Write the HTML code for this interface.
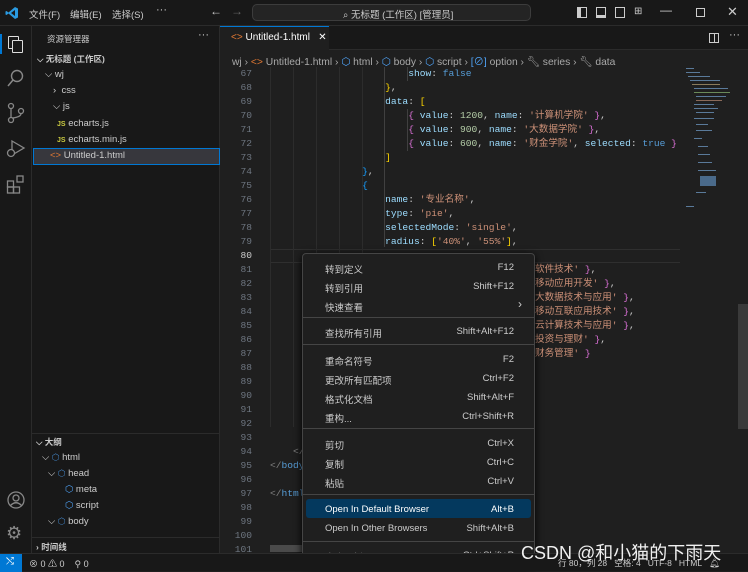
<!DOCTYPE html>
<html><head><meta charset="utf-8"><style>
*{margin:0;padding:0;box-sizing:border-box}
body{width:748px;height:571px;background:#1f1f1f;font-family:"Liberation Sans","Noto Sans CJK SC",sans-serif;color:#ccc;font-size:10px;position:relative;overflow:hidden}
.abs{position:absolute}
#title{left:0;top:0;width:748px;height:26px;background:#181818;border-bottom:1px solid #2b2b2b}
#act{left:0;top:26px;width:32px;height:527px;background:#181818;border-right:1px solid #2b2b2b}
#side{left:32px;top:26px;width:188px;height:527px;background:#181818;border-right:1px solid #2b2b2b}
.t{position:absolute;white-space:nowrap}
#tabs{left:220px;top:26px;width:528px;height:24px;background:#181818;border-bottom:1px solid #2b2b2b}
.code{font-family:"Liberation Mono","Noto Sans CJK SC",monospace;font-size:9.6px;position:absolute;white-space:pre;line-height:14px}
.ln{position:absolute;left:222px;width:30px;text-align:right;font-family:"Liberation Mono",monospace;font-size:9.6px;color:#6e7681}
.k{color:#9cdcfe}.s{color:#ce9178}.n{color:#b5cea8}.b{color:#569cd6}.y{color:#ffd700}.p{color:#da70d6}.bl{color:#179fff}.g{color:#808080}
#menu{left:302px;top:253px;width:233px;height:312px;background:#1f1f1f;border:1px solid #454545;border-radius:4px;box-shadow:0 2px 8px #000}
.mi{position:absolute;left:22px;font-size:9.5px;color:#ccc}
.mk{position:absolute;right:20px;font-size:9.5px;color:#ccc}
.sep{position:absolute;left:0;right:0;height:1px;background:#454545}
#status{left:0;top:553px;width:748px;height:18px;background:#181818;border-top:1px solid #2b2b2b}
</style></head><body>
<div id="title" class="abs">
 <svg class="abs" style="left:5px;top:6px" width="14" height="14" viewBox="0 0 14 14"><path d="M10 1 L13 2.5 V11.5 L10 13 L3.5 7.5 L1.5 9 L0.5 8.5 V5.5 L1.5 5 L3.5 6.5Z M10 4 L6 7 L10 10Z" fill="#2a9ae0" fill-rule="evenodd"/></svg>
 <div class="t" style="left:29px;top:7px;font-size:9.5px">文件(F)</div>
 <div class="t" style="left:70px;top:7px;font-size:9.5px">编辑(E)</div>
 <div class="t" style="left:112px;top:7px;font-size:9.5px">选择(S)</div>
 <div class="t" style="left:156px;top:4px;font-size:11px">···</div>
 <div class="t" style="left:210px;top:4px;font-size:12px;color:#ccc">←</div>
 <div class="t" style="left:231px;top:4px;font-size:12px;color:#666">→</div>
 <div class="abs" style="left:252px;top:4px;width:279px;height:17px;border:1px solid #3c3c3c;border-radius:5px;background:#242424"></div>
 <div class="t" style="left:343px;top:7px;font-size:9.5px">⌕ 无标题 (工作区) [管理员]</div>
 <div class="abs" style="left:577px;top:7px;width:10px;height:11px;border:1px solid #ccc;border-left:4px solid #ccc"></div>
 <div class="abs" style="left:596px;top:7px;width:10px;height:11px;border:1px solid #ccc;border-bottom:3px solid #ccc"></div>
 <div class="abs" style="left:615px;top:7px;width:10px;height:11px;border:1px solid #ccc"></div>
 <div class="t" style="left:634px;top:6px;font-size:10px">⊞</div>
 <div class="t" style="left:660px;top:3px;font-size:12px">—</div>
 <div class="abs" style="left:696px;top:8px;width:9px;height:9px;border:1px solid #ccc"></div>
 <div class="t" style="left:727px;top:4px;font-size:13px">✕</div>
</div>
<div id="act" class="abs">
 <div class="abs" style="left:0;top:8px;width:2px;height:20px;background:#0078d4"></div>
 <div class="abs" style="left:8px;top:10px;width:11px;height:13px;border:1.5px solid #ddd;border-radius:1px"></div>
 <div class="abs" style="left:12px;top:14px;width:11px;height:13px;border:1.5px solid #ddd;background:#181818;border-radius:1px"></div>
 <svg class="abs" style="left:6px;top:42px" width="20" height="20"><circle cx="11" cy="8" r="5.5" stroke="#888" stroke-width="1.4" fill="none"/><path d="M7 12 L2 18" stroke="#888" stroke-width="1.5"/></svg>
 <svg class="abs" style="left:6px;top:76px" width="20" height="22"><circle cx="5" cy="4" r="2.5" stroke="#888" fill="none" stroke-width="1.3"/><circle cx="5" cy="18" r="2.5" stroke="#888" fill="none" stroke-width="1.3"/><circle cx="15" cy="9" r="2.5" stroke="#888" fill="none" stroke-width="1.3"/><path d="M5 6.5 V15.5 M15 11.5 Q15 15 6.5 16" stroke="#888" fill="none" stroke-width="1.3"/></svg>
 <svg class="abs" style="left:6px;top:112px" width="20" height="22"><path d="M6 3 L18 10 L6 17Z" stroke="#888" fill="none" stroke-width="1.3"/><circle cx="5" cy="15" r="3.5" fill="#181818" stroke="#888" stroke-width="1.3"/></svg>
 <svg class="abs" style="left:6px;top:148px" width="20" height="20"><rect x="1.5" y="7" width="6" height="6" stroke="#888" fill="none" stroke-width="1.3"/><rect x="7.5" y="13" width="6" height="6" stroke="#888" fill="none" stroke-width="1.3"/><rect x="1.5" y="13" width="6" height="6" stroke="#888" fill="none" stroke-width="1.3"/><rect x="11" y="2" width="6" height="6" stroke="#888" fill="none" stroke-width="1.3"/></svg>
 <svg class="abs" style="left:6px;top:464px" width="20" height="20"><circle cx="10" cy="10" r="8" stroke="#888" fill="none" stroke-width="1.3"/><circle cx="10" cy="8" r="3" stroke="#888" fill="none" stroke-width="1.3"/><path d="M4.5 15.5 Q10 10 15.5 15.5" stroke="#888" fill="none" stroke-width="1.3"/></svg>
 <div class="t" style="left:6px;top:497px;font-size:18px;color:#888">⚙</div>
</div>
<div id="side" class="abs">
 <div class="t" style="left:15px;top:7px;font-size:8.5px">资源管理器</div>
 <div class="t" style="left:166px;top:3px;font-size:11px">···</div>
 <div class="t" style="left:5px;top:27px;font-size:8.5px;font-weight:bold">⌵ 无标题 (工作区)</div>
 <div class="t" style="left:13px;top:43px;font-size:9.5px">⌵ wj</div>
 <div class="t" style="left:21px;top:59px;font-size:9.5px">›&nbsp; css</div>
 <div class="t" style="left:21px;top:75px;font-size:9.5px">⌵ js</div>
 <div class="t" style="left:25px;top:92px;font-size:9.5px"><span style="color:#cbcb41;font-size:7px;font-weight:bold">JS</span> echarts.js</div>
 <div class="t" style="left:25px;top:108px;font-size:9.5px"><span style="color:#cbcb41;font-size:7px;font-weight:bold">JS</span> echarts.min.js</div>
 <div class="abs" style="left:1px;top:122px;width:187px;height:17px;background:#37373d;border:1px solid #0078d4"></div>
 <div class="t" style="left:18px;top:124px;font-size:9.5px"><span style="color:#e37933">&lt;&gt;</span> Untitled-1.html</div>
 <div class="abs" style="left:0;top:407px;width:188px;height:1px;background:#2b2b2b"></div>
 <div class="t" style="left:4px;top:410px;font-size:8.5px;font-weight:bold">⌵ 大纲</div>
 <div class="t" style="left:10px;top:426px;font-size:9.5px">⌵ <span style="color:#4fa3f7">⬡</span> html</div>
 <div class="t" style="left:16px;top:442px;font-size:9.5px">⌵ <span style="color:#4fa3f7">⬡</span> head</div>
 <div class="t" style="left:33px;top:458px;font-size:9.5px"><span style="color:#4fa3f7">⬡</span> meta</div>
 <div class="t" style="left:33px;top:474px;font-size:9.5px"><span style="color:#4fa3f7">⬡</span> script</div>
 <div class="t" style="left:16px;top:490px;font-size:9.5px">⌵ <span style="color:#4fa3f7">⬡</span> body</div>
 <div class="abs" style="left:0;top:511px;width:188px;height:1px;background:#2b2b2b"></div>
 <div class="t" style="left:4px;top:515px;font-size:8.5px;font-weight:bold">› 时间线</div>
</div>
<div id="tabs" class="abs">
 <div class="abs" style="left:0;top:0;width:109px;height:24px;background:#1f1f1f;border-top:1px solid #0078d4"></div>
 <div class="t" style="left:11px;top:6px;font-size:10px;color:#fff"><span style="color:#e37933">&lt;&gt;</span> Untitled-1.html&nbsp;&nbsp; ✕</div>
 <div class="abs" style="left:489px;top:7px;width:10px;height:10px;border:1px solid #ccc"></div>
 <div class="abs" style="left:494px;top:7px;width:1px;height:10px;background:#ccc"></div>
 <div class="t" style="left:509px;top:3px;font-size:11px">···</div>
</div>
<div class="t" style="left:232px;top:53px;font-size:10.3px;color:#a9a9a9">wj › <span style="color:#e37933">&lt;&gt;</span> Untitled-1.html › <span style="color:#4fa3f7">⬡</span> html › <span style="color:#4fa3f7">⬡</span> body › <span style="color:#4fa3f7">⬡</span> script › <span style="color:#4fa3f7">[⊘]</span> option › <span>🔧︎</span> series › 🔧︎ data</div>
<div class="ln" style="top:67px;line-height:14px">67<br>68<br>69<br>70<br>71<br>72<br>73<br>74<br>75<br>76<br>77<br>78<br>79<br><span style="color:#ccc">80</span><br>81<br>82<br>83<br>84<br>85<br>86<br>87<br>88<br>89<br>90<br>91<br>92<br>93<br>94<br>95<br>96<br>97<br>98<br>99<br>100<br>101</div>
<div class="abs" style="left:270px;top:249px;width:410px;height:14px;border-top:1px solid #2f2f2f;border-bottom:1px solid #2f2f2f"></div>
<div class="abs" style="left:270px;top:67px;width:1px;height:360px;background:#2c2c2c"></div>
<div class="abs" style="left:293px;top:67px;width:1px;height:360px;background:#2c2c2c"></div>
<div class="abs" style="left:316px;top:67px;width:1px;height:360px;background:#2c2c2c"></div>
<div class="abs" style="left:339px;top:67px;width:1px;height:360px;background:#2c2c2c"></div>
<div class="abs" style="left:362px;top:67px;width:1px;height:360px;background:#2c2c2c"></div>
<div class="abs" style="left:384px;top:67px;width:1px;height:180px;background:#404040"></div>
<div class="abs" style="left:407px;top:67px;width:1px;height:14px;background:#404040"></div>
<div class="abs" style="left:407px;top:109px;width:1px;height:42px;background:#404040"></div>
<div class="code" style="left:270px;top:67px">                        <span class="k">show</span>: <span class="b">false</span>
                    <span class="y">}</span>,
                    <span class="k">data</span>: <span class="y">[</span>
                        <span class="p">{</span> <span class="k">value</span>: <span class="n">1200</span>, <span class="k">name</span>: <span class="s">'计算机学院'</span> <span class="p">}</span>,
                        <span class="p">{</span> <span class="k">value</span>: <span class="n">900</span>, <span class="k">name</span>: <span class="s">'大数据学院'</span> <span class="p">}</span>,
                        <span class="p">{</span> <span class="k">value</span>: <span class="n">600</span>, <span class="k">name</span>: <span class="s">'财金学院'</span>, <span class="k">selected</span>: <span class="b">true</span> <span class="p">}</span>
                    <span class="y">]</span>
                <span class="bl">}</span>,
                <span class="bl">{</span>
                    <span class="k">name</span>: <span class="s">'专业名称'</span>,
                    <span class="k">type</span>: <span class="s">'pie'</span>,
                    <span class="k">selectedMode</span>: <span class="s">'single'</span>,
                    <span class="k">radius</span>: <span class="y">[</span><span class="s">'40%'</span>, <span class="s">'55%'</span><span class="y">]</span>,
</div>
<div class="code" style="left:535px;top:263px"><span class="s">软件技术'</span> <span class="p">}</span>,
<span class="s">移动应用开发'</span> <span class="p">}</span>,
<span class="s">大数据技术与应用'</span> <span class="p">}</span>,
<span class="s">移动互联应用技术'</span> <span class="p">}</span>,
<span class="s">云计算技术与应用'</span> <span class="p">}</span>,
<span class="s">投资与理财'</span> <span class="p">}</span>,
<span class="s">财务管理'</span> <span class="p">}</span></div>
<div class="code" style="left:270px;top:445px">    <span class="g">&lt;/</span>
<span class="g">&lt;/</span><span class="b">body</span>

<span class="g">&lt;/</span><span class="b">html</span></div>
<div class="abs" style="left:270px;top:545px;width:32px;height:7px;background:#4a4a4a"></div>
<svg class="abs" style="left:684px;top:66px" width="52" height="150">
<g fill="#5a7a9a"><rect x="2" y="2" width="8" height="1"/><rect x="2" y="6" width="14" height="1"/><rect x="4" y="10" width="22" height="1"/><rect x="6" y="14" width="30" height="1"/><rect x="8" y="18" width="28" height="1" fill="#8a7a5a"/><rect x="10" y="22" width="34" height="1"/><rect x="10" y="26" width="36" height="1" fill="#6a8a5a"/><rect x="12" y="30" width="30" height="1"/><rect x="12" y="34" width="26" height="1" fill="#8a6a5a"/><rect x="10" y="38" width="20" height="1"/><rect x="10" y="42" width="24" height="1"/><rect x="12" y="46" width="18" height="1"/><rect x="10" y="52" width="20" height="1"/><rect x="12" y="58" width="12" height="1"/><rect x="12" y="64" width="16" height="1"/><rect x="10" y="72" width="8" height="1"/><rect x="14" y="80" width="10" height="1"/><rect x="14" y="88" width="12" height="1"/><rect x="14" y="96" width="14" height="1"/><rect x="14" y="104" width="18" height="1"/><rect x="16" y="110" width="16" height="10" fill="#4a6a8a"/><rect x="12" y="126" width="10" height="1"/><rect x="2" y="140" width="8" height="1"/></g></svg>
<div class="abs" style="left:738px;top:304px;width:10px;height:125px;background:#3a3a3a"></div>
<div id="menu" class="abs">
 <div class="mi" style="top:8px">转到定义</div><div class="mk" style="top:8px">F12</div>
 <div class="mi" style="top:27px">转到引用</div><div class="mk" style="top:27px">Shift+F12</div>
 <div class="mi" style="top:46px">快速查看</div><div class="mk" style="top:43px;right:12px;font-size:12px">›</div>
 <div class="sep" style="top:63px"></div>
 <div class="mi" style="top:72px">查找所有引用</div><div class="mk" style="top:72px">Shift+Alt+F12</div>
 <div class="sep" style="top:90px"></div>
 <div class="mi" style="top:100px">重命名符号</div><div class="mk" style="top:100px">F2</div>
 <div class="mi" style="top:119px">更改所有匹配项</div><div class="mk" style="top:119px">Ctrl+F2</div>
 <div class="mi" style="top:138px">格式化文档</div><div class="mk" style="top:138px">Shift+Alt+F</div>
 <div class="mi" style="top:157px">重构...</div><div class="mk" style="top:157px">Ctrl+Shift+R</div>
 <div class="sep" style="top:174px"></div>
 <div class="mi" style="top:184px">剪切</div><div class="mk" style="top:184px">Ctrl+X</div>
 <div class="mi" style="top:203px">复制</div><div class="mk" style="top:203px">Ctrl+C</div>
 <div class="mi" style="top:222px">粘贴</div><div class="mk" style="top:222px">Ctrl+V</div>
 <div class="sep" style="top:240px"></div>
 <div class="abs" style="left:3px;top:245px;width:225px;height:19px;background:#04395e;border-radius:3px"></div>
 <div class="mi" style="top:250px;color:#fff">Open In Default Browser</div><div class="mk" style="top:250px;color:#fff">Alt+B</div>
 <div class="mi" style="top:269px">Open In Other Browsers</div><div class="mk" style="top:269px">Shift+Alt+B</div>
 <div class="sep" style="top:287px"></div>
 <div class="mi" style="top:296px">命令面板...</div><div class="mk" style="top:296px">Ctrl+Shift+P</div>
</div>
<div id="status" class="abs">
 <div class="abs" style="left:0;top:0;width:22px;height:18px;background:#0078d4"></div>
 <div class="t" style="left:6px;top:2px;font-size:10px;color:#fff">⤭</div>
 <div class="t" style="left:29px;top:3px;font-size:9px">⊗ 0 ⚠ 0&nbsp;&nbsp;&nbsp; ⚲ 0</div>
 <div class="t" style="left:558px;top:3px;font-size:8.5px">行 80，列 28&nbsp;&nbsp;&nbsp;空格: 4&nbsp;&nbsp;&nbsp;UTF-8&nbsp;&nbsp;&nbsp;HTML&nbsp;&nbsp;&nbsp;🔔︎</div>
</div>
<div class="t" style="left:521px;top:539px;font-size:18px;color:#f0f0f0">CSDN @和小猫的下雨天</div>
</body></html>
